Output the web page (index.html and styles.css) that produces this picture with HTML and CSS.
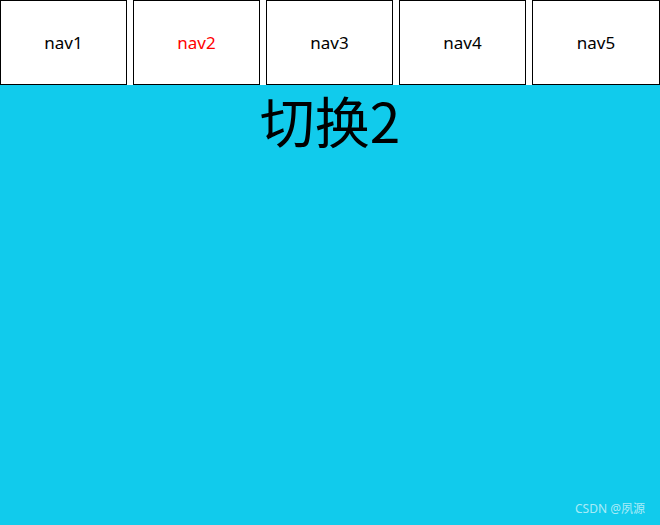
FILE: index.html
```html
<!DOCTYPE html>
<html lang="zh-CN">
<head>
<meta charset="utf-8">
<title>切换</title>
<link rel="stylesheet" href="styles.css">
</head>
<body>
<div class="page">
  <ul class="nav">
    <li class="nav-item">nav1</li>
    <li class="nav-item active">nav2</li>
    <li class="nav-item">nav3</li>
    <li class="nav-item">nav4</li>
    <li class="nav-item">nav5</li>
  </ul>
  <div class="panel">
    <div class="panel-title">切换2</div>
  </div>
  <div class="watermark">CSDN @夙源</div>
</div>
</body>
</html>
```
FILE: styles.css
```css
html, body {
  margin: 0;
  padding: 0;
  height: 100%;
}
body {
  font-family: "Noto Sans", "Noto Sans CJK SC", sans-serif;
  background: #ffffff;
}
.page {
  position: relative;
  display: flex;
  flex-direction: column;
  height: 525px;
  width: 660px;
}
.nav {
  list-style: none;
  margin: 0;
  padding: 0;
  display: flex;
  gap: 6px;
  flex: 0 0 auto;
}
.nav-item {
  box-sizing: border-box;
  width: 127px;
  height: 85px;
  border: 1px solid #000;
  display: flex;
  align-items: center;
  justify-content: center;
  font-size: 17px;
  color: #000;
}
.nav-item:last-child {
  flex: 1 1 auto;
}
.nav-item.active {
  color: #ff0000;
}
.panel {
  flex: 1 1 auto;
  background: #11cbec;
  text-align: center;
}
.panel-title {
  font-family: "Noto Sans CJK SC", sans-serif;
  font-size: 55px;
  line-height: 1;
  padding-top: 7px;
  color: #000;
}
.watermark {
  position: absolute;
  right: 15px;
  bottom: 8px;
  font-family: "Noto Sans", "Noto Sans CJK SC", sans-serif;
  font-size: 12px;
  color: rgba(255, 255, 255, 0.65);
}
```
